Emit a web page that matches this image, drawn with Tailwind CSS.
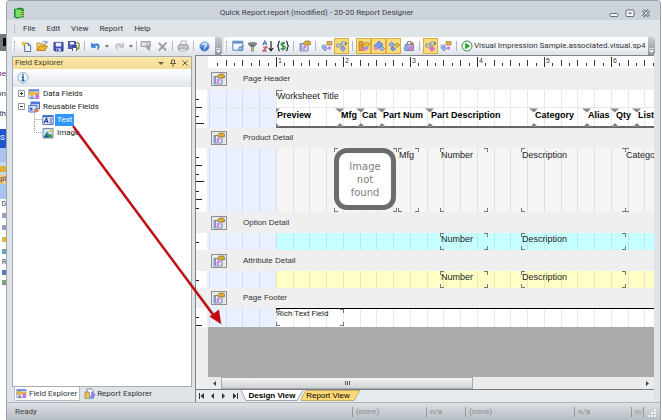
<!DOCTYPE html>
<html lang="en">
<head>
<meta charset="utf-8">
<title>Quick Report.report (modified) - 20-20 Report Designer</title>
<script src="https://cdn.jsdelivr.net/npm/@tailwindcss/browser@4"></script>
</head>
<body class="flex h-screen overflow-hidden bg-white font-[Roboto,'Open_Sans',sans-serif] text-[8px] leading-[10px] text-[#303438]">

<!-- Icon set -->
<svg class="absolute h-0 w-0" aria-hidden="true">
  <defs>
    <linearGradient id="gBlue" x1="0" y1="0" x2="0" y2="1"><stop offset="0" stop-color="#8fc3f5"/><stop offset="1" stop-color="#1c55b5"/></linearGradient>
    <pattern id="grid" width="67" height="99" patternUnits="userSpaceOnUse"><path d="M1.500 0V99M18.500 0V99M34.500 0V99M51.500 0V99" stroke="#000" stroke-opacity=".085"/></pattern>
    <pattern id="ticks" x="1" width="67" height="12" patternUnits="userSpaceOnUse">
      <path d="M.5 1v10M17.500 4v6M33.500 4v6M50.500 4v6" stroke="#333"/><path d="M8.500 7v3M25.500 7v3M42.500 7v3M59.500 7v3" stroke="#333"/>
    </pattern>
    <pattern id="vticks" width="12" height="34" patternUnits="userSpaceOnUse"><path d="M0 9.500h3M0 17.500h6M0 26.500h3M0 33.500h8" stroke="#222"/></pattern>
  </defs>
  <symbol id="i-app" viewBox="0 0 12 12"><path d="M1 2 8 .5l3 1.500v8L3.500 11.500 1 10z" fill="#1c8437"/><path d="M2.500 2.500h6v7.500h-6z" fill="#7ddb6a"/><path d="M8.500 2.500v8l2.500-1V2z" fill="#2f9440"/><path d="M8.500 4h2v1h-2zM8.500 6h2v1h-2zM8.500 8h2v1h-2z" fill="#ffd45a"/></symbol>
  <symbol id="i-new" viewBox="0 0 12 12"><path d="M4 2.500h4l2.500 2.500v6.500H4z" fill="#f2f6fc" stroke="#34568d" stroke-width=".9"/><path d="M8 2.500V5h2.500" fill="#9db6dd" stroke="#34568d" stroke-width=".8"/><path d="M3 .5v5M.5 3h5M1.200 1.200l3.600 3.600M4.800 1.200 1.200 4.800" stroke="#e7b61f" stroke-width="1"/></symbol>
  <symbol id="i-open" viewBox="0 0 12 12"><path d="M1 10.500V3h3l1 1h4v2" fill="#f6d77b" stroke="#ae7c19" stroke-width=".8"/><path d="M1 10.500 3.500 6H11.500L9 10.500z" fill="#ecb431" stroke="#a87415" stroke-width=".8"/><path d="M6.500 2c1.500-1.400 3-1 4 .7M11 1v2H9" fill="none" stroke="#4b76b5" stroke-width=".9"/></symbol>
  <symbol id="i-save" viewBox="0 0 12 12"><path d="M1 1.500h10v9.500H2L1 10z" fill="#4650b8" stroke="#27307f" stroke-width=".8"/><path d="M3 2h6v4H3z" fill="#eef1fb"/><path d="M3.500 8h5v3h-5z" fill="#d7dcf2"/><path d="M4.200 8.500h1.500V11H4.200z" fill="#27307f"/></symbol>
  <symbol id="i-saveall" viewBox="0 0 12 12"><path d="M.5 1.500h7v7h-7z" fill="#5863c6" stroke="#2f3888" stroke-width=".8"/><path d="M2 2h4v2.500H2z" fill="#eef1fb"/><path d="M4 5h5v6H4z" fill="#3f4bb0"/><path d="M5 8h3v3H5z" fill="#fff"/><path d="M8.500 2.500c3 0 3.500 4 1.500 6M11.500 8l-2.500 1.500L8.500 6.500" fill="none" stroke="#7c962a" stroke-width="1.300"/></symbol>
  <symbol id="i-undo" viewBox="0 0 12 12"><path d="M1.500 2v5h5L4.800 5.300C8 3.500 10 5.500 8 10c4-4 2.500-9-4.500-6.200z" fill="#3a7ad9" stroke="#2260bd" stroke-width=".5"/></symbol>
  <symbol id="i-redo" viewBox="0 0 12 12"><path d="M10.500 2v5h-5l1.700-1.700C4 3.500 2 5.500 4 10 0 6 1.500 1 8.500 3.800z" fill="#c9ccd0" stroke="#a7abb0" stroke-width=".5"/></symbol>
  <symbol id="i-run" viewBox="0 0 12 12"><path d="M1 1.500h9.500v5H1z" fill="#c6c8cb" stroke="#97999c" stroke-width=".8"/><path d="M2 3.500h4M2 5h3" stroke="#fff" stroke-width=".8"/><path d="m5 7 5 4.500V5z" fill="#9fa1a4"/></symbol>
  <symbol id="i-del" viewBox="0 0 12 12"><path d="m2 2 8 8.500M10.500 1.500 2 10.500" stroke="#9b9da1" stroke-width="2.200"/></symbol>
  <symbol id="i-print" viewBox="0 0 12 12"><path d="M4 1h5.500l-1 4h-5z" fill="#f3f3f3" stroke="#9fa2a6" stroke-width=".7"/><path d="M1 5.500 3 4.500h7l1.500 1V9.500H1z" fill="#bfc2c6" stroke="#909398" stroke-width=".7"/><path d="M2.500 8.500h7v2.500h-7z" fill="#e8e8e9" stroke="#909398" stroke-width=".6"/></symbol>
  <symbol id="i-help" viewBox="0 0 12 12"><circle cx="6" cy="6" r="5.200" fill="url(#gBlue)" stroke="#7ba4dc" stroke-width=".7"/><path d="M4 4.600C4 2.300 8 2.300 8 4.600 8 6 6 5.800 6 7.400M6 8.300v1.300" fill="none" stroke="#fff" stroke-width="1.300"/></symbol>
  <symbol id="i-form" viewBox="0 0 12 12"><path d="M.8 1.200h10v9H.8z" fill="#f3f7fd" stroke="#5574a8" stroke-width=".9"/><path d="M1 1.500h9.500v2H1z" fill="#5c8bd6"/><circle cx="8.500" cy="8.800" r="2" fill="#9cc4f1" stroke="#4677bd" stroke-width=".8"/><path d="m9 7 2-1.500.7 1" stroke="#5574a8" fill="none"/></symbol>
  <symbol id="i-filter" viewBox="0 0 12 12"><path d="M1 3h10L7.300 7v4.500H4.700V7z" fill="#6c7074"/><ellipse cx="6" cy="3" rx="4.800" ry="1.500" fill="#8c9093" stroke="#4d5154" stroke-width=".6"/><path d="M5.500 6h1v5h-1z" fill="#cfd66c"/></symbol>
  <symbol id="i-sort" viewBox="0 0 12 12"><path d="M.8 5 2.800.7 4.800 5M1.500 3.700h2.600" fill="none" stroke="#3358b4" stroke-width="1"/><path d="M1 7h3.800L1 11h4" fill="none" stroke="#c23a55" stroke-width="1.200"/><path d="M9 1v9M6.800 8 9 10.800 11.200 8" fill="none" stroke="#222" stroke-width="1.200"/></symbol>
  <symbol id="i-sum" viewBox="0 0 12 12"><path d="M2.800 1C.5 2 2.500 5 .5 6c2 1 0 4 2.300 5M9.200 1c2.300 1 .3 4 2.300 5-2 1 0 4-2.300 5" fill="none" stroke="#222" stroke-width="1.100"/><path d="M8.300 3.500C7 2.300 4 2.800 4 4.500s4.300 1.200 4.300 3S5 9.800 3.800 8.500M6 1.500v9" fill="none" stroke="#1b8b2e" stroke-width="1.200"/></symbol>
  <symbol id="i-prop" viewBox="0 0 12 12"><path d="M1 3.500h8v7.500H1z" fill="#e4ebf8" stroke="#66779f" stroke-width=".8"/><path d="M1.500 4h1.500v6.500H1.500z" fill="#7c93c9"/><path d="M4 3.800 6.500 1H10.500l1.200 1.500v2L8.500 4.800 6.500 5.500z" fill="#d9ae35" stroke="#7c6a2a" stroke-width=".7"/><path d="M5.300 5.800v4.400M3.500 7h3.700M3.700 9.500l3.200-3" stroke="#e070dc" stroke-width="1.200"/><path d="M8 6.500h1v4H8z" fill="#90a5d4"/></symbol>
  <symbol id="i-link" viewBox="0 0 12 12"><path d="M1 5h4v3H1z" fill="#b9cdf1" stroke="#7a8fb5" stroke-width=".6"/><path d="M6 1.500h5v3.500H6z" fill="#dfb24a" stroke="#94722a" stroke-width=".6"/><path d="m4 6 2.500 2.500L4 11 1.500 8.500z" fill="#8fb2f0" stroke="#4869b8" stroke-width=".5"/><circle cx="8.500" cy="8" r="1.800" fill="#df78d8"/></symbol>
  <symbol id="i-link2" viewBox="0 0 12 12"><path d="M.8 4h4v3h-4z" fill="#ccd4dd" stroke="#69788c" stroke-width=".7"/><path d="M5.500 2h4v3h-4z" fill="#d8dee4" stroke="#69788c" stroke-width=".7"/><path d="M9 1.500 11.700 3.500 9 5.500z" fill="#5c8f4b"/><path d="m7 6 2.500 2.700L7 11.500 4.500 8.700z" fill="#89aef2" stroke="#4869b8" stroke-width=".6"/></symbol>
  <symbol id="i-link3" viewBox="0 0 12 12"><path d="M.8 4h4v3h-4z" fill="#ccd4dd" stroke="#69788c" stroke-width=".7"/><path d="M5.500 2h4v3h-4z" fill="#d8dee4" stroke="#69788c" stroke-width=".7"/><path d="M9 1.500 11.700 3.500 9 5.500z" fill="#5c8f4b"/><path d="m7 6 2.700 2.700L7 11.500 4.300 8.700z" fill="#e66fd7" stroke="#a9479d" stroke-width=".5"/></symbol>
  <symbol id="i-dia1" viewBox="0 0 12 12"><path d="M1 1.500h4v9H1z" fill="#e09b3a" stroke="#a86a1b" stroke-width=".6"/><path d="m5 4.500 3-2.500 3.500 1.500-2 4L5 9z" fill="#e9bd42" stroke="#987324" stroke-width=".6"/><circle cx="6" cy="9" r="2" fill="#e070dc"/><path d="m9 6 2 2-2 2-2-2z" fill="#799bea"/></symbol>
  <symbol id="i-dia2" viewBox="0 0 12 12"><path d="m6 1 4 3.500L4.500 9 1 6z" fill="#6f9bf0" stroke="#3c61bb" stroke-width=".6"/><path d="m2.500 6 2.500 2.500-2.500 2.500L.5 8.500z" fill="#e583d9"/><path d="m9 6 2.500 2.500L9 11.200 6.700 8.500z" fill="#9bbcf7" stroke="#3c61bb" stroke-width=".6"/></symbol>
  <symbol id="i-dia3" viewBox="0 0 12 12"><path d="m3.500 2 3 2.500-3 2.500L.7 4.500z" fill="#8fb2f0" stroke="#4869b8" stroke-width=".6"/><path d="m9 3 2.700 2L9 7.500 6.500 5z" fill="#dfc045" stroke="#8a6f1c" stroke-width=".6"/><path d="m5 6.500 2.500 2.300L5 11 2.500 8.800z" fill="#6f9bf0" stroke="#3c61bb" stroke-width=".6"/></symbol>
  <symbol id="i-bag" viewBox="0 0 12 12"><path d="M4 4.500c0-4 4.500-4 4.500 0" fill="none" stroke="#6e7f96" stroke-width="1.200"/><path d="M2 4.500h8.500v6H2z" fill="#a9b6cb" stroke="#586b8d" stroke-width=".7"/><path d="m3.500 6 2.500 2.500L3.500 11 1 8.500z" fill="#8fb2f0" stroke="#4869b8" stroke-width=".6"/><circle cx="7.800" cy="8" r="2" fill="#e070dc"/><path d="M8 2.500h2.500V5H8z" fill="#c9585c"/></symbol>
  <symbol id="i-play" viewBox="0 0 12 12"><circle cx="6" cy="6" r="5" fill="#f4fbf2" stroke="#49874a" stroke-width="1"/><path d="m4.200 2.800 5 3.200-5 3.200z" fill="#25a02b"/></symbol>
  <symbol id="i-info" viewBox="0 0 12 12"><circle cx="6" cy="5.500" r="5" fill="#eef5fb" stroke="#86a9c6" stroke-width=".9"/><path d="M4.500 10 6 12l1.500-2" fill="#d5e4f0" stroke="#86a9c6" stroke-width=".6"/><path d="M6 2v1.500M4.800 4.700H6v3.600M4.600 8.500h2.900" fill="none" stroke="#1f60a8" stroke-width="1.500"/></symbol>
  <symbol id="i-data" viewBox="0 0 12 12"><path d="M.8 1.500h10v9H.8z" fill="#e8effb" stroke="#7488bb" stroke-width=".8"/><path d="M1 1.500h10v2H1z" fill="#6a8fe0"/><path d="m4 2.500 3 3-3 3-3-3z" fill="#f2bb31" stroke="#b3801b" stroke-width=".5"/><path d="M7 4.500h3.500v3H7z" fill="#e29a3d"/><path d="m9 6 2.300 2.500L9 11.500 6.700 8.500z" fill="#d76be0"/><path d="M2.500 8.500h3V11h-3z" fill="#6c8fe2"/></symbol>
  <symbol id="i-reuse" viewBox="0 0 12 12"><path d="M3 1h8.500v7H3z" fill="#b9cdf3" stroke="#3e5eac" stroke-width=".9"/><path d="M3 1h8.500v2H3z" fill="#4c7be0"/><path d="M.8 4.500h7.500v6.500H.8z" fill="#dde7fa" stroke="#3e5eac" stroke-width=".8"/><path d="M2 6.500h2.500v3H2z" fill="#3f68cc"/><path d="M6 8h4.500v3H6z" fill="#d9825f"/></symbol>
  <symbol id="i-text" viewBox="0 0 12 12"><path d="M.8 1.500h10.400v9H.8z" fill="#eef2fc" stroke="#4767b3" stroke-width=".9"/><path d="M1 1.500h10v1.700H1z" fill="#3e6fd6"/><path d="M2 9 4.500 4 6 9M3 7.500h2.600" fill="none" stroke="#27449a" stroke-width="1.200"/><path d="M7.500 5h3M7.500 7h2.500M7.500 9h3" stroke="#27449a" stroke-width=".9"/></symbol>
  <symbol id="i-image" viewBox="0 0 12 12"><path d="M1 1.500h10v9.500H1z" fill="#cfe5fb" stroke="#6b7f99" stroke-width=".9"/><path d="M1.500 10.500 5 4.500l3 3.500 1.200-1.500 1.500 4z" fill="#3d9450"/><path d="M1.500 10.500 4 7l3.500 3.500z" fill="#235f9c"/><circle cx="8.300" cy="4" r="1.300" fill="#f4b53d"/></symbol>
  <symbol id="i-report" viewBox="0 0 12 12"><path d="M3 .8h4.500L9 2.500v6H3z" fill="#f5f7fc" stroke="#5c6f9a" stroke-width=".8"/><path d="M1 4h4.500v6.500H1z" fill="#e5c05c" stroke="#917327" stroke-width=".6"/><path d="M7.500 3.500 10 5v5.500H7z" fill="#5c7fe0"/><circle cx="7" cy="9.500" r="1.800" fill="#78a3f0"/><path d="m10 5 1.700 2L10 9 8.300 7z" fill="#d76be0"/></symbol>
</svg>

<!-- Sliver of the window behind -->
<div class="flex w-[6px] shrink-0 flex-col overflow-hidden whitespace-nowrap bg-white" aria-hidden="true">
  <div class="h-[34px]"></div>
  <div class="h-[17px] bg-[#777] pl-[3px] pt-1"><div class="h-2 bg-black"></div></div>
  <div class="mt-[18px] flex h-[20px] justify-end text-[8px] text-[#6a2d6e]">he</div>
  <div class="flex h-[20px] justify-end text-[8px]">on</div>
  <div class="flex h-[20px] justify-end text-[8px]">th</div>
  <div class="h-[19px] bg-[#1d55cf] pt-1 text-white">S</div>
  <div class="h-[14px] bg-[#a9c3ee]"></div>
  <div class="h-[13px] bg-[#c4d8f6] py-1"><div class="h-[6px] bg-[#e0ad35]"></div></div>
  <div class="flex h-[9px] justify-end bg-[#f7c982] text-[7px] leading-[9px]">pl</div>
  <div class="h-[15px] bg-[#a5c4f2]"></div>
  <div class="h-[14px] text-right text-[7px]">D</div>
  <div class="flex flex-col gap-[7px] pl-[2px]">
    <div class="h-[5px] bg-[#a79cc0]"></div><div class="h-[5px] bg-[#8f9ec2]"></div><div class="h-[5px] bg-[#e4b23e]"></div><div class="h-[5px] bg-[#6ea1c9]"></div>
  </div>
  <div class="py-[3px] text-right text-[7px]">R</div>
  <div class="flex flex-col gap-[5px] pl-[2px]"><div class="h-[5px] bg-[#5d78c2]"></div><div class="h-[5px] bg-[#7fa27a]"></div></div>
</div>

<!-- Designer window -->
<div class="relative mr-px flex min-w-0 flex-1 flex-col rounded-t-[4px] border border-b-0 border-[#9ba3aa] bg-[#dfe4e8]">

  <header class="flex h-[19px] shrink-0 items-center rounded-t-[3px] bg-[#ccd3db] px-[6px] pt-[4px]">
    <svg class="size-[12px]"><use href="#i-app"/></svg>
    <h1 class="flex-1 text-center text-[#3b4046]">Quick Report.report (modified) - 20-20 Report Designer</h1>
    <div class="flex gap-1 pr-[2px]">
      <button class="h-3 w-3" aria-label="Minimize"><svg viewBox="0 0 12 12"><rect x="2" y="6.500" width="8" height="3" rx="1" fill="#f4f6f8" stroke="#69717a"/></svg></button>
      <button class="h-3 w-3" aria-label="Restore"><svg viewBox="0 0 12 12"><rect x="2" y="3" width="8" height="6.500" rx="1" fill="#f4f6f8" stroke="#69717a"/><path d="M4.500 5.500h3v1.500h-3z" fill="#69717a"/></svg></button>
      <button class="h-3 w-3" aria-label="Close"><svg viewBox="0 0 12 12"><path d="m3 3 6 6.500M9 3 3 9.500" stroke="#69717a" stroke-width="3"/><path d="m3 3 6 6.500M9 3 3 9.500" stroke="#f4f6f8" stroke-width="1"/></svg></button>
    </div>
  </header>

  <nav class="flex h-[17px] shrink-0 items-center gap-[11px] px-[7px]">
    <span class="-mr-[3px] h-[9px] border-l border-dotted border-[#98a0a8]"></span>
    <button>File</button><button>Edit</button><button>View</button><button>Report</button><button>Help</button>
  </nav>

  <div class="flex h-[18px] shrink-0 pl-[5px] pr-[5px]">
    <div class="flex shrink-0 items-center rounded-l-[3px] bg-linear-to-b from-white via-[#f4f6f9] to-[#dde2e8] pl-[2px]">
      <span class="mr-[3px] h-[10px] border-l border-dotted border-[#98a0a8]"></span>
      <button class="flex h-4 w-4 items-center justify-center" aria-label="New"><svg class="size-[11px]"><use href="#i-new"/></svg></button>
      <button class="flex h-4 w-4 items-center justify-center" aria-label="Open"><svg class="size-[12px]"><use href="#i-open"/></svg></button>
      <button class="flex h-4 w-4 items-center justify-center" aria-label="Save"><svg class="size-[11px]"><use href="#i-save"/></svg></button>
      <button class="flex h-4 w-4 items-center justify-center" aria-label="Save all"><svg class="size-[12px]"><use href="#i-saveall"/></svg></button>
      <span class="mx-[2px] h-[10px] w-px bg-[#b4bac1]"></span>
      <button class="flex h-4 w-4 items-center justify-center" aria-label="Undo"><svg class="size-[11px]"><use href="#i-undo"/></svg></button>
      <button class="flex h-4 w-2 items-center justify-center" aria-label="Undo list"><svg class="h-[3px] w-[4px]" viewBox="0 0 4 3"><path d="M0 0h4L2 3z" fill="#777d84"/></svg></button>
      <button class="flex h-4 w-4 items-center justify-center" aria-label="Redo"><svg class="size-[11px]"><use href="#i-redo"/></svg></button>
      <button class="flex h-4 w-2 items-center justify-center" aria-label="Redo list"><svg class="h-[3px] w-[4px]" viewBox="0 0 4 3"><path d="M0 0h4L2 3z" fill="#777d84"/></svg></button>
      <span class="mx-[1px] h-[10px] w-px bg-[#b4bac1]"></span>
      <button class="flex h-4 w-4 items-center justify-center" aria-label="Run"><svg class="size-[12px]"><use href="#i-run"/></svg></button>
      <button class="flex h-4 w-4 items-center justify-center" aria-label="Delete"><svg class="size-[11px]"><use href="#i-del"/></svg></button>
      <span class="mx-[2px] h-[10px] w-px bg-[#b4bac1]"></span>
      <button class="flex h-4 w-4 items-center justify-center" aria-label="Print"><svg class="size-[12px]"><use href="#i-print"/></svg></button>
      <span class="mx-[2px] h-[10px] w-px bg-[#b4bac1]"></span>
      <button class="flex h-4 w-4 items-center justify-center" aria-label="Help"><svg class="size-[11px]"><use href="#i-help"/></svg></button>
      <button class="ml-[3px] flex h-[18px] w-[7px] items-end justify-center rounded-r-[3px] bg-linear-to-b from-[#c9ced4] to-[#8d949c] pb-[2px]" aria-label="Toolbar options"><svg class="h-[5px] w-[5px]" viewBox="0 0 5 5"><path d="M0 .5h5M.5 2.500h4L2.500 4.500z" fill="#fff" stroke="#fff" stroke-width=".6"/></svg></button>
    </div>
    <div class="ml-[2px] flex min-w-0 flex-1 items-center rounded-[3px] bg-linear-to-b from-white via-[#f4f6f9] to-[#dde2e8] pl-[2px]">
      <span class="mr-[3px] h-[10px] border-l border-dotted border-[#98a0a8]"></span>
      <button class="flex h-4 w-[15px] items-center justify-center" aria-label="Form"><svg class="size-[12px]"><use href="#i-form"/></svg></button>
      <button class="flex h-4 w-[15px] items-center justify-center" aria-label="Filter"><svg class="size-[11px]"><use href="#i-filter"/></svg></button>
      <button class="flex h-4 w-[15px] items-center justify-center" aria-label="Sort"><svg class="size-[12px]"><use href="#i-sort"/></svg></button>
      <button class="flex h-4 w-[15px] items-center justify-center" aria-label="Totals"><svg class="size-[12px]"><use href="#i-sum"/></svg></button>
      <span class="mx-[3px] h-[10px] w-px bg-[#b4bac1]"></span>
      <button class="flex h-4 w-[15px] items-center justify-center" aria-label="Properties"><svg class="size-[12px]"><use href="#i-prop"/></svg></button>
      <span class="mx-[3px] h-[10px] w-px bg-[#b4bac1]"></span>
      <button class="flex h-4 w-[15px] items-center justify-center" aria-label="Link fields"><svg class="size-[12px]"><use href="#i-link"/></svg></button>
      <button class="flex h-4 w-[15px] items-center justify-center border border-[#e0ab3d] bg-[#fbdc7c]" aria-label="Link rows" aria-pressed="true"><svg class="size-[12px]"><use href="#i-link2"/></svg></button>
      <span class="mx-[3px] h-[10px] w-px bg-[#b4bac1]"></span>
      <button class="flex h-4 w-[15px] items-center justify-center border border-[#e0ab3d] bg-[#fbdc7c]" aria-label="Products" aria-pressed="true"><svg class="size-[12px]"><use href="#i-dia1"/></svg></button>
      <button class="flex h-4 w-[15px] items-center justify-center border border-[#e0ab3d] bg-[#fbdc7c]" aria-label="Options" aria-pressed="true"><svg class="size-[12px]"><use href="#i-dia2"/></svg></button>
      <button class="flex h-4 w-[15px] items-center justify-center border border-[#e0ab3d] bg-[#fbdc7c]" aria-label="Attributes" aria-pressed="true"><svg class="size-[12px]"><use href="#i-dia3"/></svg></button>
      <button class="flex h-4 w-[15px] items-center justify-center" aria-label="Packages"><svg class="size-[12px]"><use href="#i-bag"/></svg></button>
      <span class="mx-[3px] h-[10px] w-px bg-[#b4bac1]"></span>
      <button class="flex h-4 w-[15px] items-center justify-center border border-[#e0ab3d] bg-[#fbdc7c]" aria-label="Group" aria-pressed="true"><svg class="size-[12px]"><use href="#i-link3"/></svg></button>
      <button class="flex h-4 w-[15px] items-center justify-center" aria-label="Ungroup"><svg class="size-[12px]"><use href="#i-link"/></svg></button>
      <span class="mx-[3px] h-[10px] w-px bg-[#b4bac1]"></span>
      <button class="flex min-w-0 flex-1 items-center gap-[1px] whitespace-nowrap pl-px"><svg class="size-[12px] shrink-0"><use href="#i-play"/></svg><span>Visual Impression Sample.associated.visual.sp4</span></button>
      <button class="flex h-[18px] w-[7px] shrink-0 items-end justify-center rounded-r-[3px] bg-linear-to-b from-[#c9ced4] to-[#8d949c] pb-[2px]" aria-label="Toolbar options"><svg class="h-[5px] w-[5px]" viewBox="0 0 5 5"><path d="M0 .5h5M.5 2.500h4L2.500 4.500z" fill="#fff" stroke="#fff" stroke-width=".6"/></svg></button>
    </div>
  </div>

  <div class="flex min-h-0 flex-1 pl-[5px] pr-[6px]">

    <!-- Field explorer -->
    <aside class="mr-[3px] flex w-[180px] shrink-0 flex-col pt-[1px]">
      <div class="flex min-h-0 flex-1 flex-col border border-[#a3abb3] bg-white">
        <div class="flex h-[12px] shrink-0 items-center bg-linear-to-b from-[#fbe7ac] to-[#f6dc93] pl-[2px] pr-[3px]">
          <h2 class="flex-1 text-[#4a3f22]">Field Explorer</h2>
          <button class="mr-[6px] h-2 w-[6px]" aria-label="Menu"><svg viewBox="0 0 6 8"><path d="M0 3h6L3 6z" fill="#6d6240"/></svg></button>
          <button class="mr-[6px] h-2 w-[6px]" aria-label="Pin"><svg viewBox="0 0 6 8"><path d="M1.500 4V1h3v3M0 4.500h6M3 4.500V8" stroke="#6d6240" fill="none"/></svg></button>
          <button class="h-2 w-[6px]" aria-label="Close"><svg viewBox="0 0 6 8"><path d="m.5 1.500 5 5M5.500 1.500l-5 5" stroke="#6d6240"/></svg></button>
        </div>
        <div class="flex h-[18px] shrink-0 items-center bg-linear-to-b from-white to-[#dfe5eb] pl-1">
          <button aria-label="Information"><svg class="size-[12px]"><use href="#i-info"/></svg></button>
        </div>
        <ul class="pl-[5px] text-[#222] *:flex *:h-[13px] *:items-center">
          <li><svg class="size-[7px]" viewBox="0 0 7 7"><path d="M.5.5h6v6h-6z" fill="#fff" stroke="#8f959c"/><path d="M2 3.500h3M3.500 2v3" stroke="#333"/></svg><svg class="ml-[3px] size-[12px]"><use href="#i-data"/></svg><span class="ml-[3px]">Data Fields</span></li>
          <li><svg class="size-[7px]" viewBox="0 0 7 7"><path d="M.5.5h6v6h-6z" fill="#fff" stroke="#8f959c"/><path d="M2 3.500h3" stroke="#333"/></svg><svg class="ml-[3px] size-[12px]"><use href="#i-reuse"/></svg><span class="ml-[3px]">Reusable Fields</span></li>
          <li><svg class="ml-[16px] h-[13px] w-[8px]" viewBox="0 0 8 13"><path d="M.5 0v13M.5 6.500h8" stroke="#8f959c" stroke-dasharray="1 1"/></svg><svg class="size-[12px]"><use href="#i-text"/></svg><span class="ml-[1px] bg-[#3297fd] px-[2px] py-px text-white">Text</span></li>
          <li><svg class="ml-[16px] h-[13px] w-[8px]" viewBox="0 0 8 13"><path d="M.5 0v6.500h8" fill="none" stroke="#8f959c" stroke-dasharray="1 1"/></svg><svg class="size-[12px]"><use href="#i-image"/></svg><span class="ml-[3px]">Image</span></li>
        </ul>
      </div>
      <div class="flex h-[15px] shrink-0 pl-[2px]">
        <button class="flex h-[14px] items-center gap-[2px] rounded-b-[2px] border border-t-0 border-[#b6bdc4] bg-white pl-px pr-[2px]"><svg class="size-[11px]"><use href="#i-data"/></svg>Field Explorer</button>
        <button class="flex h-[14px] items-center gap-[1px] pl-[4px]"><svg class="size-[12px]"><use href="#i-report"/></svg>Report Explorer</button>
      </div>
    </aside>

    <!-- Design surface -->
    <main class="flex min-w-0 flex-1 flex-col overflow-hidden border-l border-t border-[#7d838a] bg-[#efefef] font-['Liberation_Sans',Arial,sans-serif]">
      <div class="flex h-[12px] shrink-0">
        <div class="w-[12px] shrink-0"></div>
        <div class="relative flex-1 overflow-hidden bg-white text-[7px] leading-[9px]">
          <svg class="absolute inset-0 h-full w-full"><rect width="3000" height="12" fill="url(#ticks)"/><rect width="8" height="12" fill="#fff"/></svg>
          <div class="relative flex pl-[70px] *:w-[67px] *:shrink-0"><span>1</span><span>2</span><span>3</span><span>4</span><span>5</span><span>6</span></div>
        </div>
      </div>

      <section>
        <div class="flex h-[22px] items-center pl-[15px]"><button class="flex h-[14px] w-[16px] items-center justify-center border border-[#8e9194] bg-[#e8e9ea]" aria-label="Page Header properties"><svg class="size-[12px]"><use href="#i-prop"/></svg></button><h3 class="pl-4">Page Header</h3></div>
        <div class="flex h-[38px]">
          <svg class="h-full w-[11px] shrink-0 bg-white"><rect width="9" height="37" fill="url(#vticks)"/></svg>
          <div class="relative ml-[1px] flex flex-1 bg-white text-[9px] text-[#222]">
            <div class="w-[68px] shrink-0 bg-[#eaf0ff]"></div>
            <svg class="absolute inset-0 h-full w-full"><rect x="0" width="3000" height="38" fill="url(#grid)"/><path d="M0 17.500h3000" stroke="#e8e8ec"/></svg>
            <div class="relative flex-1 border-b-2 border-[#666]">
              <svg class="absolute left-0 top-0 h-[37px] w-full" fill="#858585">
                <path d="M.5 6V.5h6" fill="none" stroke="#777"/>
                <g id="tri"></g>
              </svg>
              <div class="absolute left-[1px] top-[1px]">Worksheet Title</div>
              <div class="absolute inset-x-0 top-[20px] whitespace-nowrap font-bold text-black" id="heads"></div>
            </div>
          </div>
        </div>
      </section>

      <section>
        <div class="flex h-[20px] items-center pl-[15px]"><button class="flex h-[14px] w-[16px] items-center justify-center border border-[#8e9194] bg-[#e8e9ea]" aria-label="Product Detail properties"><svg class="size-[12px]"><use href="#i-prop"/></svg></button><h3 class="pl-4">Product Detail</h3></div>
        <div class="flex h-[64px]">
          <svg class="h-full w-[11px] shrink-0 bg-white"><rect width="9" height="63" fill="url(#vticks)"/></svg>
          <div class="relative ml-[1px] flex flex-1 bg-[#f5f5f5] text-[9px] text-[#222]">
            <div class="w-[68px] shrink-0 bg-[#eaf0ff]"></div>
            <svg class="absolute inset-0 h-full w-full"><rect width="3000" height="64" fill="url(#grid)"/></svg>
            <div class="relative flex-1">
              <div data-field class="absolute bottom-0 left-[58px] top-0 w-[63px]"><div class="flex h-[62px] w-[62px] items-center justify-center rounded-[13px] border-5 border-[#6c6c6c] bg-white text-center font-['DejaVu_Sans',sans-serif] text-[10px] leading-[13px] text-[#808080]">Image<br>not<br>found</div></div>
              <div data-field class="absolute bottom-0 left-[122px] top-0 w-[21px] pl-[1px] pt-[2px]">Mfg</div>
              <div data-field class="absolute bottom-0 left-[164px] top-0 w-[48px] pl-[1px] pt-[2px]">Number</div>
              <div data-field class="absolute bottom-0 left-[245px] top-0 w-[105px] pl-[1px] pt-[2px]">Description</div>
              <div data-field class="absolute bottom-0 left-[349px] top-0 w-[70px] pl-[1px] pt-[2px]">Category</div>
            </div>
          </div>
        </div>
      </section>

      <section>
        <div class="flex h-[21px] items-center pl-[15px]"><button class="flex h-[14px] w-[16px] items-center justify-center border border-[#8e9194] bg-[#e8e9ea]" aria-label="Option Detail properties"><svg class="size-[12px]"><use href="#i-prop"/></svg></button><h3 class="pl-4">Option Detail</h3></div>
        <div class="flex h-[17px]">
          <svg class="h-full w-[11px] shrink-0 bg-white"><rect width="9" height="16" fill="url(#vticks)"/></svg>
          <div class="relative ml-[1px] flex flex-1 bg-[#c5ffff] text-[9px] text-[#222]">
            <div class="w-[68px] shrink-0 bg-[#eaf0ff]"></div>
            <svg class="absolute inset-0 h-full w-full"><rect width="3000" height="17" fill="url(#grid)"/></svg>
            <div class="relative flex-1">
              <div data-field class="absolute bottom-0 left-[164px] top-0 w-[48px] pl-[1px] pt-[1px]">Number</div>
              <div data-field class="absolute bottom-0 left-[245px] top-0 w-[105px] pl-[1px] pt-[1px]">Description</div>
            </div>
          </div>
        </div>
      </section>

      <section>
        <div class="flex h-[21px] items-center pl-[15px]"><button class="flex h-[14px] w-[16px] items-center justify-center border border-[#8e9194] bg-[#e8e9ea]" aria-label="Attribute Detail properties"><svg class="size-[12px]"><use href="#i-prop"/></svg></button><h3 class="pl-4">Attribute Detail</h3></div>
        <div class="flex h-[17px]">
          <svg class="h-full w-[11px] shrink-0 bg-white"><rect width="9" height="16" fill="url(#vticks)"/></svg>
          <div class="relative ml-[1px] flex flex-1 bg-[#ffffc6] text-[9px] text-[#222]">
            <div class="w-[68px] shrink-0 bg-[#eaf0ff]"></div>
            <svg class="absolute inset-0 h-full w-full"><rect width="3000" height="17" fill="url(#grid)"/></svg>
            <div class="relative flex-1">
              <div data-field class="absolute bottom-0 left-[164px] top-0 w-[48px] pl-[1px] pt-[1px]">Number</div>
              <div data-field class="absolute bottom-0 left-[245px] top-0 w-[105px] pl-[1px] pt-[1px]">Description</div>
            </div>
          </div>
        </div>
      </section>

      <section>
        <div class="flex h-[20px] items-center pl-[15px]"><button class="flex h-[14px] w-[16px] items-center justify-center border border-[#8e9194] bg-[#e8e9ea]" aria-label="Page Footer properties"><svg class="size-[12px]"><use href="#i-prop"/></svg></button><h3 class="pl-4">Page Footer</h3></div>
        <div class="flex h-[19px]">
          <svg class="h-full w-[11px] shrink-0 bg-white"><rect width="9" height="18" fill="url(#vticks)"/></svg>
          <div class="relative ml-[1px] flex flex-1 bg-white text-[#222]">
            <div class="w-[68px] shrink-0 bg-[#eaf0ff]"></div>
            <svg class="absolute inset-0 h-full w-full"><rect width="3000" height="19" fill="url(#grid)"/></svg>
            <div class="relative flex-1 border-t border-black">
              <div data-field class="absolute bottom-[1px] left-0 top-0 w-[68px] pl-[1px] font-[Roboto,sans-serif]">Rich Text Field</div>
            </div>
          </div>
        </div>
      </section>

      <div class="ml-[12px] min-h-0 flex-1 bg-[#ababab]"></div>

      <div class="ml-[12px] flex h-[12px] shrink-0 bg-[#ebebeb]">
        <button class="flex w-[13px] items-center justify-center" aria-label="Scroll left"><svg class="h-[5px] w-[3px]" viewBox="0 0 3 5"><path d="M3 0v5L0 2.500z" fill="#444"/></svg></button>
        <div class="flex flex-1"><div class="flex w-3/5 items-center justify-center gap-px border border-[#a6a9ad] bg-linear-to-b from-[#f6f6f6] to-[#cfd1d3]"><i class="h-[4px] w-px bg-[#555]"></i><i class="h-[4px] w-px bg-[#555]"></i><i class="h-[4px] w-px bg-[#555]"></i></div></div>
        <button class="flex w-[13px] items-center justify-center" aria-label="Scroll right"><svg class="h-[5px] w-[3px]" viewBox="0 0 3 5"><path d="M0 0v5l3-2.500z" fill="#444"/></svg></button>
      </div>

      <div class="flex h-[13px] shrink-0 items-start border-t border-[#777d84] bg-[#e6ebf0] font-bold text-black">
        <div class="flex h-[12px] items-center">
          <button class="flex w-[11px] justify-center" aria-label="First"><svg class="h-[6px] w-[5px]" viewBox="0 0 5 6"><path d="M0 0h1v6H0zM5 0v6L1.500 3z" fill="#333"/></svg></button>
          <button class="flex w-[11px] justify-center" aria-label="Previous"><svg class="h-[6px] w-[5px]" viewBox="0 0 5 6"><path d="M4 0v6L1 3z" fill="#333"/></svg></button>
          <button class="flex w-[11px] justify-center" aria-label="Next"><svg class="h-[6px] w-[5px]" viewBox="0 0 5 6"><path d="M1 0v6l3-3z" fill="#333"/></svg></button>
          <button class="flex w-[12px] justify-center" aria-label="Last"><svg class="h-[6px] w-[5px]" viewBox="0 0 5 6"><path d="M4 0h1v6H4zM0 0v6l3.500-3z" fill="#333"/></svg></button>
        </div>
        <button class="relative h-[11px] w-[62px] text-center"><svg class="absolute inset-0 h-full w-full" viewBox="0 0 62 11" preserveAspectRatio="none"><path d="M0 0 5 10.500H56L62 0" fill="#fff" stroke="#8a9097" stroke-width=".8"/></svg><span class="relative">Design View</span></button>
        <button class="relative -ml-[3px] h-[11px] w-[60px] pr-[4px] text-center font-normal"><svg class="absolute inset-0 h-full w-full" viewBox="0 0 60 11" preserveAspectRatio="none"><path d="M6 .5Q2 6 1 10.500H54L60 .5z" fill="#ffd973" stroke="#b9a05c" stroke-width=".8"/></svg><span class="relative">Report View</span></button>
      </div>
    </main>
  </div>

  <footer class="flex h-[18px] shrink-0 items-center border-t border-[#aeb4bb] bg-linear-to-b from-[#dde0e4] to-[#b7bdc4] pl-[8px] text-[#858a90] *:h-[10px]">
    <span class="flex-1 text-[#3b4046]">Ready</span>
    <span class="w-[74px] border-l border-[#949aa1] pl-[3px]">(none)</span>
    <span class="w-[39px] border-l border-[#949aa1] pl-[3px]">n/a</span>
    <span class="w-[109px] border-l border-[#949aa1] pl-[3px]">(none)</span>
    <span class="w-[57px] border-l border-[#949aa1] pl-[3px]">n/a</span>
    <span class="w-[12px] overflow-hidden border-l border-[#949aa1] pl-[3px]">n/</span>
    <svg class="mr-[3px] w-[14px] border-l border-[#949aa1]" viewBox="0 0 13 10"><path d="M10 2h2v2h-2zM7 5h2v2H7zM10 5h2v2h-2zM4 8h2v2H4zM7 8h2v2H7zM10 8h2v2h-2z" fill="#f1f3f5"/></svg>
  </footer>
</div>

<!-- Drag direction arrow -->
<svg class="pointer-events-none absolute left-0 top-0 h-[420px] w-[240px]" viewBox="0 0 240 420">
  <path d="M75 129 216 318" stroke="#000" stroke-opacity=".22" stroke-width="3"/>
  <path d="M73 126 214 316" stroke="#c4080c" stroke-width="2.200"/>
  <path d="M222 325 210.500 317.500 219 311z" fill="#000" fill-opacity=".2"/>
  <path d="M221 324 209.500 316.500 219 309.500z" fill="#c4080c"/>
</svg>

<script>
  // Column edges of the header row, measured from the report margin
  const columns = [[0, 'Preview'], [64, 'Mfg'], [85, 'Cat'], [106, 'Part Num'], [154, 'Part Description'], [258, 'Category'], [311, 'Alias'], [339, 'Qty'], [361, 'List']];
  const tri = document.getElementById('tri');
  const heads = document.getElementById('heads');
  let shapes = '';
  for (const [x, label] of columns) {
    shapes += `<path d="M${x - 5} 18.500h9l-4 4zM${x - 4} 37l4-4 4 4z"/>`;
    const el = document.createElement('span');
    el.className = 'absolute top-0';
    el.style.left = x + 1 + 'px';
    el.textContent = label;
    heads.append(el);
  }
  tri.innerHTML = shapes;

  // Corner brackets around every field box
  const corners = ['left-0 top-0 border-l border-t', 'right-0 top-0 border-r border-t', 'left-0 bottom-0 border-l border-b', 'right-0 bottom-0 border-r border-b'];
  document.querySelectorAll('[data-field]').forEach(f => {
    for (const c of corners) {
      const el = document.createElement('i');
      el.className = 'absolute h-[4px] w-[4px] border-[#777] ' + c;
      f.append(el);
    }
  });
</script>
</body>
</html>
